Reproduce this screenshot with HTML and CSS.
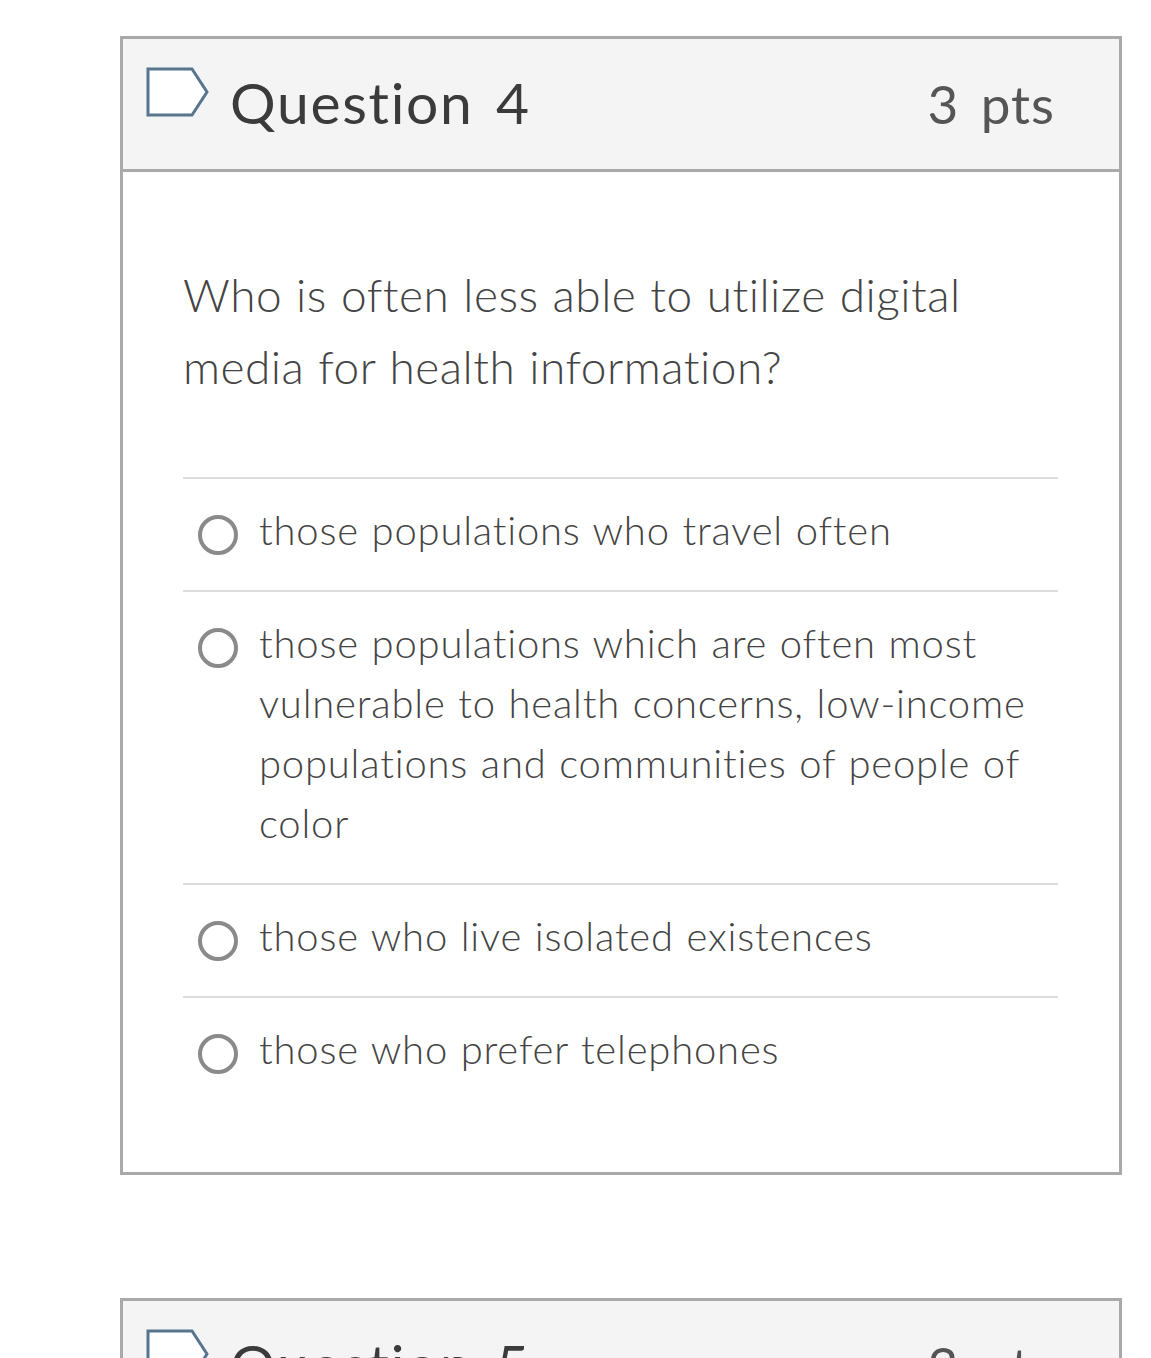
FILE: index.html
```html
<!DOCTYPE html>
<html lang="en">
<head>
<meta charset="utf-8">
<title>Quiz</title>
<link rel="stylesheet" href="styles.css">
</head>
<body>
<div class="page">
  <section class="card">
    <header class="card-head">
      <svg class="flag" width="64" height="52" viewBox="0 0 64 52" aria-hidden="true">
        <path d="M2 2 H46 L61 25 L46 48 H2 Z" fill="#ffffff" stroke="#57758f" stroke-width="3" stroke-linejoin="miter"/>
      </svg>
      <h2 class="q-title">Question 4</h2>
      <span class="q-pts">3 pts</span>
    </header>
    <div class="card-body">
      <p class="q-text">Who is often less able to utilize digital media for health information?</p>
      <ul class="answers">
        <li class="answer"><span class="radio"></span><span class="a-text">those populations who travel often</span></li>
        <li class="answer"><span class="radio"></span><span class="a-text">those populations which are often most vulnerable to health concerns, low-income populations and communities of people of color</span></li>
        <li class="answer"><span class="radio"></span><span class="a-text">those who live isolated existences</span></li>
        <li class="answer"><span class="radio"></span><span class="a-text">those who prefer telephones</span></li>
      </ul>
    </div>
  </section>
  <section class="card">
    <header class="card-head">
      <svg class="flag" width="64" height="52" viewBox="0 0 64 52" aria-hidden="true">
        <path d="M2 2 H46 L61 25 L46 48 H2 Z" fill="#ffffff" stroke="#57758f" stroke-width="3" stroke-linejoin="miter"/>
      </svg>
      <h2 class="q-title">Question 5</h2>
      <span class="q-pts">3 pts</span>
    </header>
  </section>
</div>
</body>
</html>
```
FILE: styles.css
```css
html, body {
  margin: 0;
  padding: 0;
  background: #ffffff;
}

body {
  font-family: "Lato", "Liberation Sans", sans-serif;
  color: #444444;
}

.page {
  padding: 36px 0 0 120px;
  display: flex;
  flex-direction: column;
  gap: 123px;
}

.card {
  width: 1002px;
  box-sizing: border-box;
  border: 3px solid #a9a9a9;
  background: #ffffff;
}

.card-head {
  height: 133px;
  box-sizing: border-box;
  background: #f4f4f4;
  border-bottom: 3px solid #a9a9a9;
  display: flex;
  align-items: center;
  padding: 0 64px 0 23px;
}

.flag {
  flex: none;
  align-self: flex-start;
  margin-top: 28px;
}

.q-title {
  margin: -4px 0 0 20px;
  flex: 1;
  font-size: 57px;
  font-weight: 400;
  color: #3b3b3b;
  letter-spacing: 1.7px;
  word-spacing: 6px;
}

.q-pts {
  margin-top: -2px;
  font-size: 53px;
  font-weight: 400;
  color: #555555;
  letter-spacing: 1px;
  word-spacing: 7px;
}

.card-body {
  padding: 87px 61px 63px 60px;
}

.q-text {
  margin: 0 0 74px 0;
  font-size: 46px;
  line-height: 72px;
  font-weight: 300;
  color: #444444;
  letter-spacing: 0.5px;
  word-spacing: 1px;
}

.answers {
  list-style: none;
  margin: 0;
  padding: 0;
}

.answer {
  display: flex;
  align-items: flex-start;
  border-top: 2px solid #dddddd;
  padding: 26px 0 25px 0;
}

.radio {
  flex: none;
  width: 40px;
  height: 40px;
  box-sizing: border-box;
  border: 4px solid #8a8a8a;
  border-radius: 50%;
  margin: 10px 21px 0 15px;
}

.a-text {
  margin: -5px 0 5px 0;
  font-size: 40px;
  line-height: 60px;
  font-weight: 300;
  color: #444444;
  letter-spacing: 0.8px;
  word-spacing: 1px;
}
```
